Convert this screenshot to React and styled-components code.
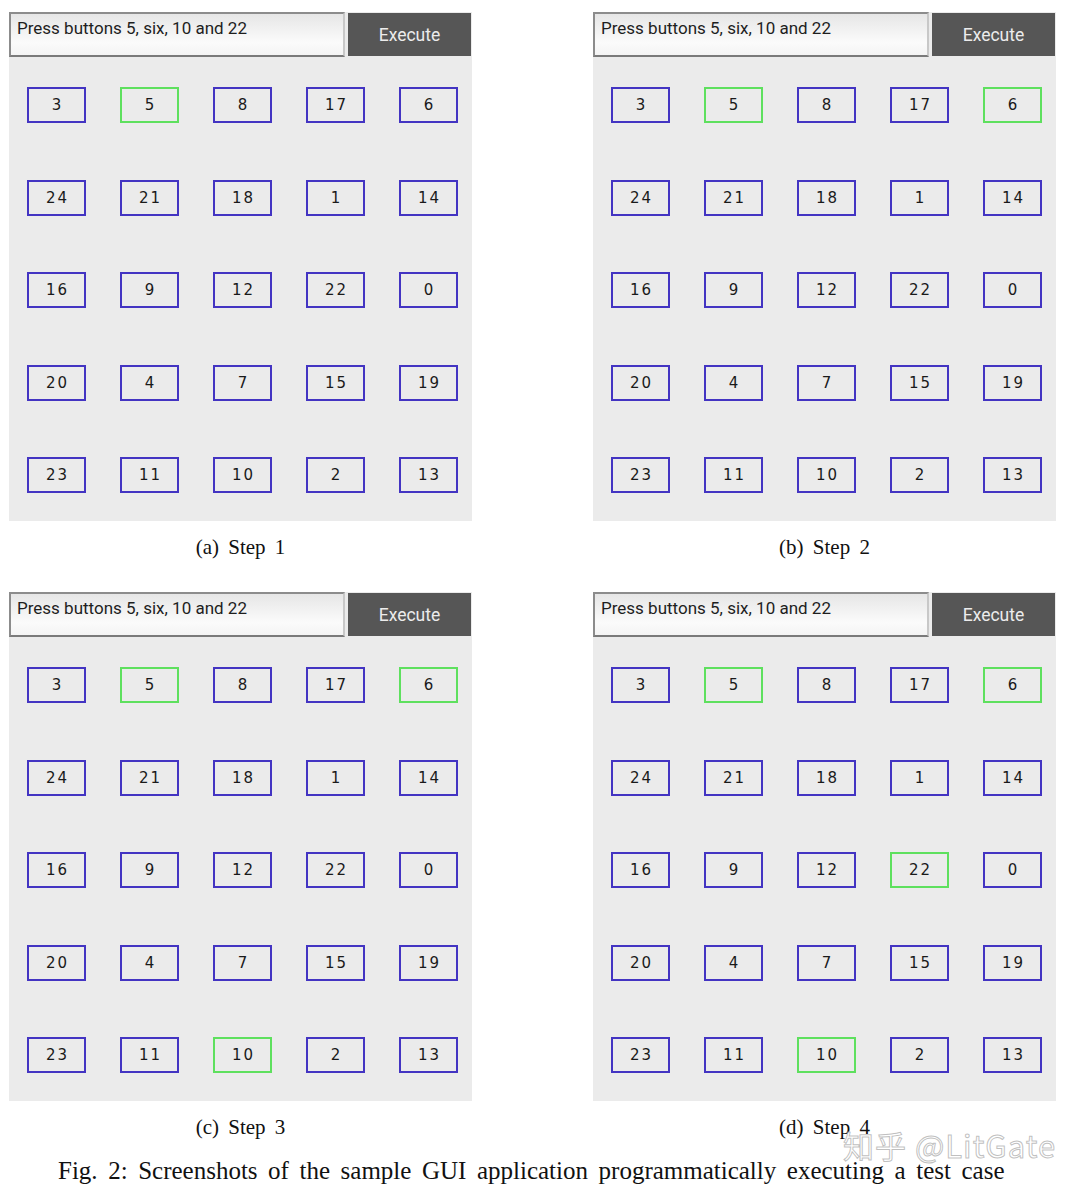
import React from 'react'
import styled, { createGlobalStyle } from 'styled-components'

const GlobalStyle = createGlobalStyle`
    body {
        margin: 0;
        background: #ffffff;
    }
`

const Page = styled.div`
    position: relative;
    width: 1080px;
    height: 1191px;
    padding: 12px 0 0 9px;
    box-sizing: border-box;
    background: #fff;
    overflow: hidden;
`

const Figures = styled.div`
    display: grid;
    grid-template-columns: 463px 463px;
    column-gap: 121px;
`

const Figure = styled.div`
    display: flex;
    flex-direction: column;
`

const Panel = styled.div`
    width: 463px;
    height: 509px;
    background: #ebebeb;
    display: flex;
    flex-direction: column;
`

const Header = styled.div`
    display: flex;
    height: 45px;
    align-items: flex-start;
`

const Field = styled.div`
    width: 336px;
    height: 45px;
    box-sizing: border-box;
    border: 2px solid #8c8c8c;
    border-right-color: #c8c8c8;
    border-bottom-color: #7a7a7a;
    background: linear-gradient(#e6e6e6, #fbfbfb 70%, #f4f4f4);
    font-family: Roboto, 'Liberation Sans', sans-serif;
    font-size: 17px;
    color: #1e1e1e;
    padding: 4px 0 0 6px;
`

const ExecuteButton = styled.div`
    margin: 1px 0 0 3px;
    width: 123px;
    height: 43px;
    background: #565656;
    color: #ececec;
    font-family: Roboto, 'Liberation Sans', sans-serif;
    font-size: 17.5px;
    display: flex;
    align-items: center;
    justify-content: center;
`

const Grid = styled.div`
    display: grid;
    grid-template-columns: repeat(5, 59px);
    grid-auto-rows: 36px;
    column-gap: 34px;
    row-gap: 56.5px;
    padding: 30px 0 0 18px;
`

const NumButton = styled.div`
    box-sizing: border-box;
    border: 2px solid ${p => (p.$on ? '#5ee05e' : '#4334c2')};
    display: flex;
    align-items: center;
    justify-content: center;
    font-family: 'DejaVu Sans', Verdana, sans-serif;
    font-size: 15px;
    letter-spacing: 2px;
    padding-left: 2px;
    color: #1a1a1a;
`

const SubCaption = styled.div`
    height: ${p => (p.$last ? '55px' : '71px')};
    box-sizing: border-box;
    padding-top: 14px;
    line-height: 24px;
    text-align: center;
    font-family: 'Liberation Serif', 'Times New Roman', serif;
    font-size: 21px;
    word-spacing: 4px;
    color: #111;
`

const FigCaption = styled.div`
    line-height: 30px;
    margin-left: 49px;
    font-family: 'Liberation Serif', 'Times New Roman', serif;
    font-size: 25px;
    word-spacing: 4.3px;
    color: #111;
    white-space: nowrap;
`

const Watermark = styled.div`
    position: absolute;
    left: 843px;
    top: 1122px;
    font-family: 'Noto Sans CJK SC', 'Noto Sans', sans-serif;
    font-size: 31px;
    color: rgba(255, 255, 255, 0.8);
    -webkit-text-stroke: 1px rgba(150, 150, 150, 0.6);
    letter-spacing: 1px;
`

const numbers = [3, 5, 8, 17, 6, 24, 21, 18, 1, 14, 16, 9, 12, 22, 0, 20, 4, 7, 15, 19, 23, 11, 10, 2, 13]

const steps = [
    { label: '(a) Step 1', on: [5] },
    { label: '(b) Step 2', on: [5, 6] },
    { label: '(c) Step 3', on: [5, 6, 10] },
    { label: '(d) Step 4', on: [5, 6, 10, 22] },
]

const App = () => (
    <Page>
        <GlobalStyle />
        <Figures>
            {steps.map((step, i) => (
                <Figure key={step.label}>
                    <Panel>
                        <Header>
                            <Field>Press buttons 5, six, 10 and 22</Field>
                            <ExecuteButton>Execute</ExecuteButton>
                        </Header>
                        <Grid>
                            {numbers.map(n => (
                                <NumButton key={n} $on={step.on.includes(n)}>{n}</NumButton>
                            ))}
                        </Grid>
                    </Panel>
                    <SubCaption $last={i >= 2}>{step.label}</SubCaption>
                </Figure>
            ))}
        </Figures>
        <FigCaption>Fig. 2: Screenshots of the sample GUI application programmatically executing a test case</FigCaption>
        <Watermark>知乎 @LitGate</Watermark>
    </Page>
)

export default App
